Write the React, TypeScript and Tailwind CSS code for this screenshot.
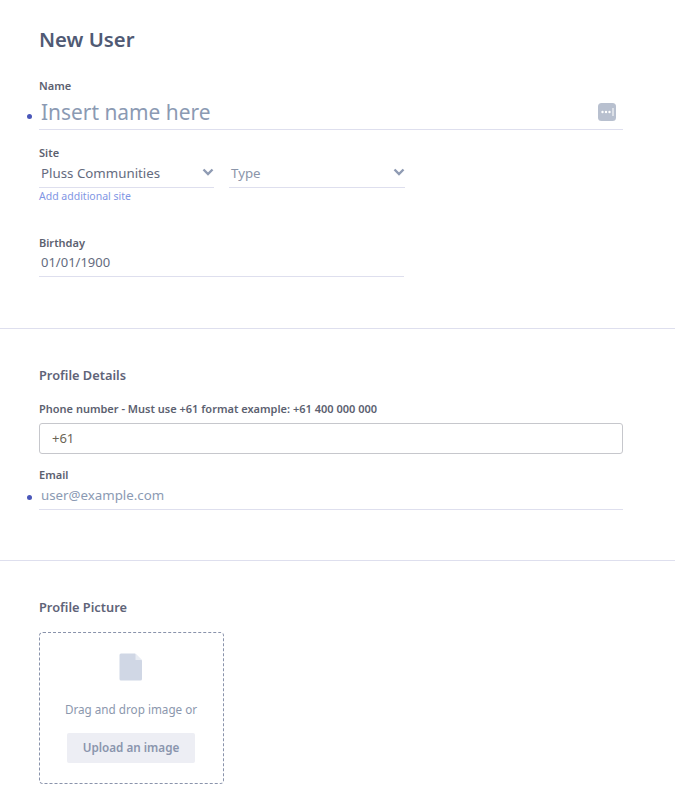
import React from "react";

function Dot({ bottom }: { bottom: string }) {
  return <span className={`absolute left-[-12px] h-[5px] w-[5px] rounded-full bg-[#4a57b9] ${bottom}`} />;
}

function Chevron() {
  return (
    <svg width="12" height="8" viewBox="0 0 12 8" className="mb-[4px]">
      <path d="M1.5 1.5 L6 6 L10.5 1.5" fill="none" stroke="#8f9bb3" strokeWidth="2.4" />
    </svg>
  );
}

const label = "block h-[16px] text-[11px] font-semibold leading-[16px] text-[#5c6170]";
const heading = "h-[20px] text-[12.8px] font-semibold leading-[20px] text-[#5f6478]";

export default function App() {
  return (
    <div className="relative h-[802px] w-[675px] overflow-hidden bg-white font-['Noto_Sans',sans-serif] text-[#5c6479]">
      <section className="h-[329px] border-b border-[#dedfee] pl-[39px] pr-[52px] pt-[25px]">
        <h1 className="h-[28px] text-[20.3px] font-semibold leading-[28px] text-[#505a74]">New User</h1>
        <label className={`mt-[25px] ${label}`}>Name</label>
        <div className="relative flex h-[36px] items-center justify-between border-b border-[#dedfee] pl-[2px] pr-[6px]">
          <Dot bottom="bottom-[10px]" />
          <span className="text-[20.9px] leading-[30px] text-[#8b9ab3]">Insert name here</span>
          <svg width="20" height="20" viewBox="0 0 20 20">
            <rect x="1" y="1" width="18" height="18" rx="3.5" fill="#b8c0cf" />
            <circle cx="5.5" cy="10" r="1.2" fill="#fff" />
            <circle cx="9" cy="10" r="1.2" fill="#fff" />
            <circle cx="12.5" cy="10" r="1.2" fill="#fff" />
            <rect x="15.5" y="6" width="1" height="8" fill="#fff" />
          </svg>
        </div>
        <label className={`mt-[15px] ${label}`}>Site</label>
        <div className="flex gap-[15px]">
          <div className="flex h-[27px] w-[175px] items-center justify-between border-b border-[#dedfee] pl-[2px]">
            <span className="text-[13.3px] text-[#646b7e]">Pluss Communities</span>
            <Chevron />
          </div>
          <div className="flex h-[27px] w-[176px] items-center justify-between border-b border-[#dedfee] pl-[2px]">
            <span className="text-[13.3px] text-[#8b95aa]">Type</span>
            <Chevron />
          </div>
        </div>
        <a className="block h-[16px] text-[10.5px] leading-[16px] text-[#7f96e4]">Add additional site</a>
        <label className={`mt-[31px] ${label}`}>Birthday</label>
        <div className="flex h-[26px] w-[365px] items-center border-b border-[#dedfee] pb-[2px] pl-[2px]">
          <span className="text-[13px] text-[#646b7e]">01/01/1900</span>
        </div>
      </section>

      <section className="h-[232px] border-b border-[#dedfee] pl-[39px] pr-[52px] pt-[36px]">
        <h2 className={heading}>Profile Details</h2>
        <label className={`mt-[16px] ${label}`}>Phone number - Must use +61 format example: +61 400 000 000</label>
        <div className="mt-[6px] flex h-[31px] items-center rounded-[3px] border border-[#c6c7cc] pl-[12px]">
          <span className="text-[13px] text-[#6b6555]">+61</span>
        </div>
        <label className={`mt-[13px] ${label}`}>Email</label>
        <div className="relative flex h-[27px] items-center border-b border-[#dedfee] pl-[2px]">
          <Dot bottom="bottom-[9px]" />
          <span className="text-[13.3px] text-[#8b9ab3]">user@example.com</span>
        </div>
      </section>

      <section className="pl-[39px] pt-[36px]">
        <h2 className={heading}>Profile Picture</h2>
        <div className="mt-[15px] flex h-[152px] w-[185px] flex-col items-center rounded-[4px] border border-dashed border-[#8a93ab] pr-[1px] pt-[19px]">
          <svg width="24" height="30" viewBox="0 0 24 30">
            <path d="M2 1.5 H16 L23 8.5 V27 a1.5 1.5 0 0 1 -1.5 1.5 H2 a1.5 1.5 0 0 1 -1.5 -1.5 V3 a1.5 1.5 0 0 1 1.5 -1.5 Z" fill="#d0d7e5" />
            <path d="M16.5 1.5 L23 8 H16.5 Z" fill="#e8ecf3" />
          </svg>
          <p className="mt-[18px] h-[18px] text-[11.7px] leading-[18px] text-[#8b97ad]">Drag and drop image or</p>
          <button className="mt-[15px] h-[30px] w-[128px] rounded-[2px] bg-[#edeef4] text-[11.7px] font-semibold text-[#8a95ad]">Upload an image</button>
        </div>
      </section>
    </div>
  );
}
